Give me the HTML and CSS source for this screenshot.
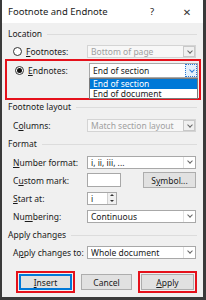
FILE: index.html
```html
<!DOCTYPE html>
<html lang="en">
<head>
    <meta charset="UTF-8">
    <title>Footnote and Endnote</title>
    <link rel="stylesheet" href="styles.css">
</head>
<body>
    <div class="window">
        <div class="titlebar">
            <span class="title">Footnote and Endnote</span>
            <span class="help">?</span>
            <span class="close">&#x2715;</span>
        </div>
        <div class="content">
            <div class="group-title first">Location</div>
            <div class="row radio-row">
                <span class="radio"></span>
                <span class="label radio-label"><u>F</u>ootnotes:</span>
                <div class="select disabled"><span class="value">Bottom of page</span><span class="arrow"></span></div>
            </div>
            <div class="highlight">
                <div class="row radio-row">
                    <span class="radio checked"></span>
                    <span class="label radio-label"><u>E</u>ndnotes:</span>
                    <div class="select focused"><span class="value">End of section</span><span class="arrow"></span></div>
                </div>
                <div class="listbox">
                    <div class="option selected">End of section</div>
                    <div class="option">End of document</div>
                </div>
            </div>

            <div class="group-title gt-layout">Footnote layout</div>
            <div class="row r-columns">
                <span class="label">C<u>o</u>lumns:</span>
                <div class="select disabled"><span class="value">Match section layout</span><span class="arrow"></span></div>
            </div>

            <div class="group-title">Format</div>
            <div class="row r-first">
                <span class="label"><u>N</u>umber format:</span>
                <div class="select"><span class="value">i, ii, iii, ...</span><span class="arrow"></span></div>
            </div>
            <div class="row">
                <span class="label">C<u>u</u>stom mark:</span>
                <div class="textbox"></div>
                <button class="btn symbol">S<u>y</u>mbol...</button>
            </div>
            <div class="row">
                <span class="label"><u>S</u>tart at:</span>
                <div class="spinner">
                    <span class="value">i</span>
                    <span class="spin"><span class="up"></span><span class="down"></span></span>
                </div>
            </div>
            <div class="row">
                <span class="label">Nu<u>m</u>bering:</span>
                <div class="select"><span class="value">Continuous</span><span class="arrow"></span></div>
            </div>

            <div class="group-title">Apply changes</div>
            <div class="row r-apply">
                <span class="label">A<u>p</u>ply changes to:</span>
                <div class="select"><span class="value">Whole document</span><span class="arrow"></span></div>
            </div>

            <div class="buttons">
                <div class="mark"><button class="btn default"><u>I</u>nsert</button></div>
                <button class="btn">Cancel</button>
                <div class="mark"><button class="btn"><u>A</u>pply</button></div>
            </div>
        </div>
    </div>
</body>
</html>
```

FILE: styles.css
```css
* {
    margin: 0;
    padding: 0;
    box-sizing: border-box;
}
body {
    background: #333;
    font-family: "Noto Sans", "DejaVu Sans", sans-serif;
    font-size: 8.5px;
    color: #1a1a1a;
}
u {
    text-decoration-thickness: 1px;
    text-underline-offset: 1px;
}
.window {
    width: 206px;
    height: 300px;
    background: #f0f0f0;
    border-left: 2px solid #3a3a3a;
    border-right: 3px solid #3a3a3a;
    border-bottom: 3px solid #3a3a3a;
    overflow: hidden;
}
.titlebar {
    height: 23px;
    background: #fff;
    display: flex;
    align-items: center;
    padding: 0 0 0 6px;
    font-size: 9.5px;
}
.title {
    flex: 1;
}
.help {
    width: 20px;
    text-align: center;
    margin-right: 12px;
}
.close {
    width: 26px;
    margin-right: 3px;
    text-align: center;
    font-size: 10px;
    color: #333;
}
.content {
    padding: 0 6px 0 6px;
}
.group-title {
    height: 12px;
    line-height: 12px;
    display: flex;
    align-items: center;
    margin-top: 5px;
}
.group-title::after {
    content: "";
    flex: 1;
    border-top: 1px solid #dcdcdc;
    margin-left: 5px;
}
.group-title.gt-layout {
    margin-top: 1px;
}
.row {
    height: 16px;
    display: flex;
    align-items: center;
    margin-top: 2px;
    padding-left: 5px;
}
.row.radio-row {
    margin-top: 3px;
}
.highlight .row.radio-row {
    margin-top: 1px;
}
.r-columns, .r-first {
    margin-top: 4px;
}
.r-apply {
    margin-top: 3px;
}
.label {
    width: 74px;
    flex-shrink: 0;
}
.radio-label {
    width: 61px;
}
.radio {
    width: 9px;
    height: 9px;
    border: 1px solid #333;
    border-radius: 50%;
    background: #fff;
    margin-right: 4px;
    flex-shrink: 0;
    display: flex;
    align-items: center;
    justify-content: center;
}
.radio.checked::after {
    content: "";
    width: 5px;
    height: 5px;
    border-radius: 50%;
    background: #111;
}
.select {
    width: 109px;
    height: 13px;
    border: 1px solid #a8a8a8;
    background: #fff;
    display: flex;
    align-items: center;
    padding-left: 3px;
}
.select .value {
    flex: 1;
    white-space: nowrap;
    overflow: hidden;
}
.select .arrow {
    width: 12px;
    height: 11px;
    border-left: 1px solid #e2e2e2;
    position: relative;
}
.select .arrow::after {
    content: "";
    position: absolute;
    left: 4px;
    top: 2px;
    width: 3px;
    height: 3px;
    border-right: 1px solid #666;
    border-bottom: 1px solid #666;
    transform: rotate(45deg);
}
.select.disabled {
    background: #f7f7f7;
    border-color: #d4d4d4;
    color: #a0a0a0;
}
.select.disabled .arrow {
    background: #f0f0f0;
    border: 1px solid #c8c8c8;
}
.select.focused {
    height: 15px;
}
.select.focused .arrow {
    height: 13px;
    border: 1px dotted #2a7ad6;
    background: #e5f1fb;
}
.select.focused .arrow::after {
    top: 3px;
    border-color: #2a7ad6;
}
.highlight {
    border: 2px solid #e5111b;
    margin: 0 0 0 -3px;
    width: 196px;
    height: 41px;
    padding-left: 3px;
}
.listbox {
    margin-left: 79px;
    width: 109px;
    border: 1px solid #7a7a7a;
    background: #fff;
}
.option {
    height: 9.5px;
    line-height: 9px;
    padding-left: 3px;
}
.option.selected {
    background: #0078d7;
    color: #fff;
}
.textbox {
    width: 34px;
    height: 14px;
    border: 1px solid #a8a8a8;
    background: #fff;
}
.btn {
    font-family: inherit;
    font-size: 8.5px;
    color: #1a1a1a;
    height: 16px;
    width: 54px;
    border: 1px solid #adadad;
    background: #e1e1e1;
}
.symbol {
    margin-left: 22px;
    width: 53px;
}
.spinner {
    width: 30px;
    height: 13px;
    border: 1px solid #a8a8a8;
    background: #fff;
    display: flex;
    align-items: center;
    padding-left: 3px;
}
.spinner .value {
    flex: 1;
}
.spin {
    width: 9px;
    height: 11px;
    display: flex;
    flex-direction: column;
    border-left: 1px solid #d0d0d0;
    background: #f0f0f0;
}
.spin span {
    flex: 1;
    display: flex;
    align-items: center;
    justify-content: center;
}
.spin .up::after {
    content: "";
    border-left: 2px solid transparent;
    border-right: 2px solid transparent;
    border-bottom: 2px solid #333;
}
.spin .down::after {
    content: "";
    border-left: 2px solid transparent;
    border-right: 2px solid transparent;
    border-top: 2px solid #333;
}
.buttons {
    display: flex;
    align-items: center;
    margin-top: 11px;
    padding-left: 8px;
    gap: 5px;
}
.mark {
    border: 2px solid #e5111b;
    padding: 1px;
    height: 22px;
    display: flex;
    align-items: center;
}
.mark .btn {
    width: 53px;
}
.btn.default {
    border: 1px solid #0078d7;
    box-shadow: inset 0 0 0 1px #0078d7;
}
.buttons > .btn {
    margin: 0 1px;
}
```
